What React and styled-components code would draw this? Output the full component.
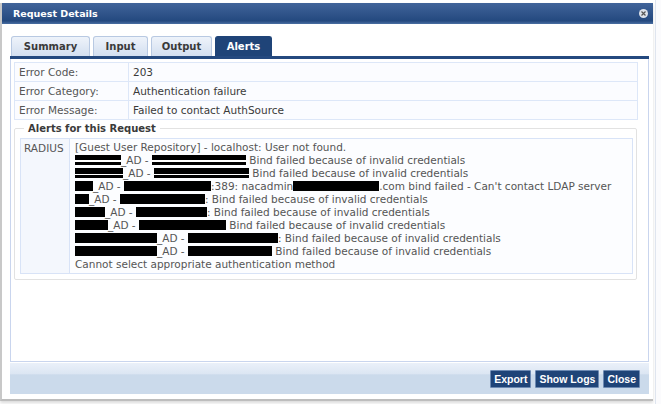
import React from "react"
import styled, { createGlobalStyle } from "styled-components"

const Global = createGlobalStyle`
  html, body { margin: 0; padding: 0; }
  body {
    background: #fff;
    font-family: "DejaVu Sans", Verdana, sans-serif;
    font-size: 10.5px;
    color: #444;
  }
`

const Page = styled.div`
  display: flex;
  align-items: flex-start;
  width: 661px;
  height: 404px;
  overflow: hidden;
  background: #fff;
`

const PageEdge = styled.div`
  flex: 1;
  align-self: stretch;
  margin-left: 2px;
  border-left: 1px solid #dfe5ef;
  background: #fbfbfd;
`

const Dialog = styled.div`
  margin-top: 3px;
  width: 651px;
  height: 396px;
  display: flex;
  flex-direction: column;
  background: #fff;
  border-left: 2px solid #c8c8c8;
  border-bottom: 2px solid #bdbdbd;
  box-shadow: 0 2px 3px rgba(0, 0, 0, 0.15);
`

const TitleBar = styled.div`
  height: 21px;
  display: flex;
  align-items: center;
  justify-content: space-between;
  padding: 0 5px 0 11px;
  background: linear-gradient(#41649a, #24497f 85%, #4a6fa3);
  color: #fff;
  font-weight: bold;
  font-size: 9.5px;
`

const CloseIcon = styled.div`
  width: 9px;
  height: 9px;
  border-radius: 50%;
  background: #dde2ea;
  display: flex;
  align-items: center;
  justify-content: center;
`

const Body = styled.div`
  flex: 1;
  display: flex;
  flex-direction: column;
  padding: 12px 4px 0 8px;
`

const Tabs = styled.div`
  display: flex;
  gap: 3px;
  padding-left: 1px;
  border-bottom: 3px solid #24497f;
`

const Tab = styled.div`
  width: ${p => p.$w}px;
  height: 20px;
  box-sizing: border-box;
  display: flex;
  align-items: center;
  justify-content: center;
  font-weight: bold;
  font-size: 10px;
  border: 1px solid ${p => (p.$active ? "#1f4478" : "#b8c9e2")};
  border-bottom: none;
  border-radius: 3px 3px 0 0;
  color: ${p => (p.$active ? "#fff" : "#3a3a3a")};
  background: ${p => (p.$active ? "#1f4478" : "linear-gradient(#eef3fa, #d3dff0)")};
`

const Panel = styled.div`
  height: 299px;
  border: 1px solid #c9d5ee;
  border-top: none;
  padding: 3px 10px 0 3px;
  display: flex;
  flex-direction: column;
`

const InfoTable = styled.div`
  display: grid;
  grid-template-columns: 114px 1fr;
  border: 1px solid #dde7f8;
  background: #fbfcff;
`

const Label = styled.div`
  height: 18px;
  display: flex;
  align-items: center;
  padding-left: 4px;
  color: #555;
  border-right: 1px solid #dde7f8;
  border-bottom: ${p => (p.$last ? "none" : "1px solid #dde7f8")};
`

const Value = styled(Label)`
  color: #3a3a3a;
  border-right: none;
`

const Fieldset = styled.fieldset`
  margin: 3px 1px 0 0;
  padding: 4px 3px 5px 5px;
  border: 1px solid #e2e2e2;
  border-radius: 2px;
`

const Legend = styled.legend`
  padding: 0 4px;
  margin-left: 4px;
  font-weight: bold;
  color: #3a3a3a;
  font-size: 10px;
`

const AlertTable = styled.div`
  display: grid;
  grid-template-columns: 49px 1fr;
  border: 1px solid #d8e3f7;
`

const Source = styled.div`
  background: #f4f7fd;
  border-right: 1px solid #d8e3f7;
  padding: 3px 0 0 3px;
  color: #555;
`

const Lines = styled.div`
  padding: 2px 0 2px 5px;
  background: #fcfdff;
`

const Line = styled.div`
  height: 13px;
  line-height: 13px;
  white-space: nowrap;
  color: #555;
`

const Redact = styled.span`
  display: inline-block;
  vertical-align: -1px;
  height: 10px;
  background: ${p => (p.$stripe ? "linear-gradient(#000 55%, #fff 55%, #fff 68%, #000 68%)" : "#000")};
`

const Footer = styled.div`
  margin: 1px 4px 5px 8px;
  height: 31px;
  display: flex;
  align-items: center;
  justify-content: flex-end;
  gap: 4px;
  padding-right: 9px;
  background: linear-gradient(#eaf0f9, #dce6f3 35%, #cbdaeb 38%, #cbdaeb);
`

const Button = styled.button`
  height: 18px;
  padding: 0 3px;
  font-family: "Liberation Sans", Arial, sans-serif;
  font-size: 10.5px;
  font-weight: bold;
  color: #fff;
  background: #1f4478;
  border: 1px solid #6d8ab3;
  border-radius: 1px;
  box-shadow: inset 0 0 0 1px #1f4478;
`

const info = [
  ["Error Code:", "203"],
  ["Error Category:", "Authentication failure"],
  ["Error Message:", "Failed to contact AuthSource"],
]

const bind = " Bind failed because of invalid credentials"

const alerts = [
  ["[Guest User Repository] - localhost: User not found."],
  [{ w: 46, s: true }, "_AD - ", { w: 94, s: true }, bind],
  [{ w: 48, s: true }, "_AD - ", { w: 95, s: true }, bind],
  [{ w: 18 }, "_AD - ", { w: 87 }, ":389: nacadmin", { w: 86 }, ".com bind failed - Can't contact LDAP server"],
  [{ w: 14 }, "_AD - ", { w: 85 }, ":" + bind],
  [{ w: 30 }, "_AD - ", { w: 71 }, ":" + bind],
  [{ w: 33 }, "_AD - ", { w: 87 }, bind],
  [{ w: 82 }, "_AD - ", { w: 90 }, ":" + bind],
  [{ w: 82 }, "_AD - ", { w: 84 }, bind],
  ["Cannot select appropriate authentication method"],
]

export default function App() {
  return (
    <Page>
      <Global />
      <Dialog>
        <TitleBar>
          <span>Request Details</span>
          <CloseIcon>
            <svg width="5" height="5" viewBox="0 0 5 5">
              <path d="M0.5 0.5L4.5 4.5M4.5 0.5L0.5 4.5" stroke="#555" strokeWidth="1.2" />
            </svg>
          </CloseIcon>
        </TitleBar>
        <Body>
          <Tabs>
            <Tab $w={79}>Summary</Tab>
            <Tab $w={55}>Input</Tab>
            <Tab $w={61}>Output</Tab>
            <Tab $w={57} $active>Alerts</Tab>
          </Tabs>
          <Panel>
            <InfoTable>
              {info.map(([k, v], i) => (
                <React.Fragment key={k}>
                  <Label $last={i === info.length - 1}>{k}</Label>
                  <Value $last={i === info.length - 1}>{v}</Value>
                </React.Fragment>
              ))}
            </InfoTable>
            <Fieldset>
              <Legend>Alerts for this Request</Legend>
              <AlertTable>
                <Source>RADIUS</Source>
                <Lines>
                  {alerts.map((parts, i) => (
                    <Line key={i}>
                      {parts.map((p, j) =>
                        typeof p === "string" ? (
                          <span key={j}>{p}</span>
                        ) : (
                          <Redact key={j} $stripe={p.s} style={{ width: p.w }} />
                        )
                      )}
                    </Line>
                  ))}
                </Lines>
              </AlertTable>
            </Fieldset>
          </Panel>
        </Body>
        <Footer>
          <Button>Export</Button>
          <Button>Show Logs</Button>
          <Button>Close</Button>
        </Footer>
      </Dialog>
      <PageEdge />
    </Page>
  )
}
